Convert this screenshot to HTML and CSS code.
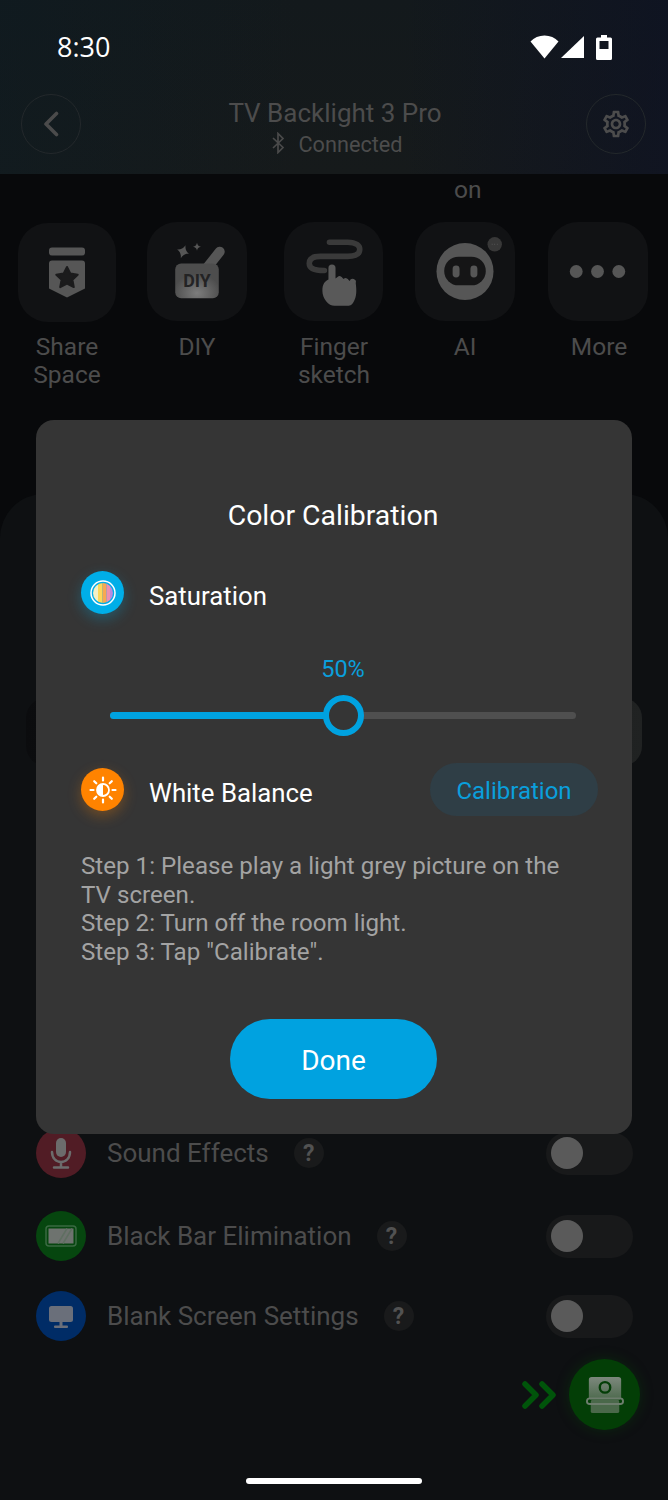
FILE: index.html
```html
<!DOCTYPE html>
<html lang="en">
<head>
<meta charset="utf-8">
<title>TV Backlight 3 Pro</title>
<link rel="stylesheet" href="styles.css">
</head>
<body>
<div class="screen">
  <header class="header">
    <div class="status">
      <span class="time">8:30</span>
      <div class="status-icons">
        <svg class="ic-wifi" viewBox="0 0 29 24"><path d="M14.5 23.5 0.5 6.5C4 2.6 9 0.5 14.5 0.5S25 2.6 28.5 6.5Z" fill="#fff"/></svg>
        <svg class="ic-cell" viewBox="0 0 23 22"><path d="M0 22 23 0V22Z" fill="#fff"/></svg>
        <svg class="ic-batt" viewBox="0 0 16 25"><path d="M5 0h6v2.500h3.500a1.500 1.500 0 0 1 1.500 1.500v19.500a1.500 1.500 0 0 1-1.500 1.500h-13a1.500 1.500 0 0 1-1.500-1.500v-19.500a1.500 1.500 0 0 1 1.500-1.500h3.500zM3.500 6v8h9v-8z" fill="#fff" fill-rule="evenodd"/></svg>
      </div>
    </div>
    <div class="nav">
      <div class="round-btn">
        <svg class="ic-back" viewBox="0 0 16 26"><path d="M13.500 2.500 3 13l10.500 10.500" fill="none" stroke="#4b4b4b" stroke-width="3.600" stroke-linecap="round" stroke-linejoin="round"/></svg>
      </div>
      <div class="nav-title">
        <div class="title">TV Backlight 3 Pro</div>
        <div class="subtitle">
          <svg class="ic-bt" viewBox="0 0 14 22"><path d="M2 6l10 9.500-5 5V1.500l5 5L2 16" fill="none" stroke="#4a4a4a" stroke-width="1.700"/></svg>
          <span>Connected</span>
        </div>
      </div>
      <div class="round-btn">
        <svg class="ic-gear" viewBox="0 0 24 24"><path fill="#4c4c4c" d="M19.430 12.980c.04-.32.07-.64.07-.98 0-.34-.03-.66-.07-.98l2.110-1.650c.19-.15.24-.42.12-.64l-2-3.460c-.09-.16-.26-.25-.44-.25-.06 0-.12.01-.17.03l-2.490 1c-.52-.4-1.080-.73-1.690-.98l-.38-2.650C14.460 2.180 14.250 2 14 2h-4c-.25 0-.46.18-.49.42l-.38 2.650c-.61.25-1.170.59-1.690.98l-2.490-1c-.06-.02-.12-.03-.18-.03-.17 0-.34.09-.43.25l-2 3.460c-.13.22-.07.49.12.64l2.110 1.650c-.04.32-.07.65-.07.98 0 .33.03.66.07.98l-2.110 1.650c-.19.15-.24.42-.12.64l2 3.460c.09.16.26.25.44.25.06 0 .12-.01.17-.03l2.490-1c.52.4 1.080.73 1.690.98l.38 2.650c.03.24.24.42.49.42h4c.25 0 .46-.18.49-.42l.38-2.650c.61-.25 1.170-.59 1.690-.98l2.490 1c.06.02.12.03.18.03.17 0 .34-.09.43-.25l2-3.460c.12-.22.07-.49-.12-.64l-2.110-1.650zm-1.980-1.710c.04.31.05.52.05.73 0 .21-.02.43-.05.73l-.14 1.130.89.7 1.080.84-.7 1.210-1.270-.51-1.040-.42-.9.68c-.43.32-.84.56-1.250.73l-1.060.43-.16 1.130-.2 1.350h-1.400l-.19-1.350-.16-1.130-1.060-.43c-.43-.18-.83-.41-1.230-.71l-.91-.7-1.060.43-1.270.51-.7-1.210 1.080-.84.89-.7-.14-1.130c-.03-.31-.05-.54-.05-.74s.02-.43.05-.73l.14-1.130-.89-.7-1.080-.84.7-1.210 1.270.51 1.040.42.9-.68c.43-.32.84-.56 1.250-.73l1.060-.43.16-1.130.2-1.350h1.390l.19 1.350.16 1.130 1.060.43c.43.18.83.41 1.230.71l.91.7 1.060-.43 1.270-.51.7 1.210-1.070.85-.89.7.14 1.130zM12 8c-2.210 0-4 1.790-4 4s1.790 4 4 4 4-1.790 4-4-1.790-4-4-4zm0 6c-1.100 0-2-.9-2-2s.9-2 2-2 2 .9 2 2-.9 2-2 2z"/></svg>
      </div>
    </div>
  </header>

  <div class="on-row">on</div>

  <div class="tools">
    <div class="tool tool-share">
      <div class="tile">
        <svg class="tile-ic" viewBox="0 0 98 98"><rect x="31" y="24" width="36" height="8" rx="3" fill="#565656"/><path d="M31 40a3 3 0 0 1 3-3h30a3 3 0 0 1 3 3v25L49 74 31 65Z" fill="#565656"/><path d="M49 43.500l3.400 6.600 7.300 1.100-5.300 5.100 1.400 7.300-6.800-3.500-6.800 3.500 1.400-7.300-5.300-5.100 7.300-1.100Z" fill="#1b1b1c" stroke="#1b1b1c" stroke-width="2" stroke-linejoin="round"/></svg>
      </div>
      <div class="tool-label">Share<br>Space</div>
    </div>
    <div class="tool tool-diy">
      <div class="tile">
        <svg class="tile-ic" viewBox="0 0 100 100">
          <defs><radialGradient id="glare" cx="0.5" cy="0.85" r="0.55"><stop offset="0" stop-color="#7d7d7d"/><stop offset="1" stop-color="#4d4d4d"/></radialGradient></defs>
          <path d="M61 45 73 30" stroke="#565656" stroke-width="10" stroke-linecap="round"/>
          <rect x="28" y="42" width="44" height="35" rx="6" fill="url(#glare)"/>
          <path d="M36 23c1 4 3 6 6.500 7-3.500 1-5.500 3-6.500 7-1-4-3-6-6.500-7 3.500-1 5.500-3 6.500-7Z" fill="#565656" transform="rotate(20 36 30)"/>
          <path d="M50 21c.5 2.500 1.500 3.500 4 4-2.500.5-3.500 1.500-4 4-.5-2.500-1.500-3.500-4-4 2.500-.5 3.500-1.500 4-4Z" fill="#565656"/>
          <text x="50" y="66" class="diy-mark">DIY</text>
        </svg>
      </div>
      <div class="tool-label">DIY</div>
    </div>
    <div class="tool tool-finger">
      <div class="tile">
        <svg class="tile-ic" viewBox="0 0 98 98">
          <path d="M45 20h18c9 0 12 4 12 7 0 4-3 7-12 7H36c-8 0-11 3-11 7s4 7 15 7" fill="none" stroke="#3a3a3a" stroke-width="5.500" stroke-linecap="round"/>
          <path d="M44 45.500a3.500 3.500 0 0 1 7 0V56l2-1.500a3 3 0 0 1 5 1l1 1a3 3 0 0 1 5 1l1 1a3 3 0 0 1 6 2C72 68 72 74 69 79 67 83 65 83 62 83H50C44 83 38 76 38 68 38 62 40 59 44 57Z" fill="#595959"/>
        </svg>
      </div>
      <div class="tool-label">Finger<br>sketch</div>
    </div>
    <div class="tool tool-ai">
      <div class="tile">
        <svg class="tile-ic" viewBox="0 0 100 100">
          <circle cx="50" cy="50" r="28.800" fill="#565656"/>
          <rect x="29" y="35" width="42" height="29" rx="14.500" fill="#151516"/>
          <rect x="37.500" y="44" width="7" height="12" rx="3.500" fill="#565656"/>
          <rect x="55.500" y="44" width="7" height="12" rx="3.500" fill="#565656"/>
          <circle cx="80" cy="22.500" r="7.300" fill="#383838"/>
          <path d="M77 22.500h.8M79.600 22.500h.8M82.200 22.500h.8" stroke="#5c5c5c" stroke-width="1"/>
        </svg>
      </div>
      <div class="tool-label">AI</div>
    </div>
    <div class="tool tool-more">
      <div class="tile">
        <svg class="tile-ic" viewBox="0 0 100 100"><circle cx="28" cy="50" r="6.500" fill="#565656"/><circle cx="49.500" cy="50" r="6.500" fill="#565656"/><circle cx="71" cy="50" r="6.500" fill="#565656"/></svg>
      </div>
      <div class="tool-label">More</div>
    </div>
  </div>

  <section class="panel">
    <div class="under-card"></div>
    <div class="rows">
      <div class="row row-first">
        <div class="row-ic ic-red">
          <svg viewBox="0 0 50 50" class="row-svg"><rect x="20" y="10" width="10" height="19" rx="5" fill="#6c6c6c"/><path d="M16 24c0 6 4 10 9 10s9-4 9-10M25 34v5M18 39.500h14" fill="none" stroke="#6c6c6c" stroke-width="2.500" stroke-linecap="round"/></svg>
        </div>
        <span class="row-text">Sound Effects</span>
        <span class="help">?</span>
        <div class="toggle"><span class="knob"></span></div>
      </div>
      <div class="row row-second">
        <div class="row-ic ic-green">
          <svg viewBox="0 0 50 50" class="row-svg"><rect x="10" y="15" width="30" height="20" rx="3" fill="none" stroke="#3a6a42" stroke-width="1.500"/><rect x="12.500" y="17.500" width="25" height="15" fill="#6e736f"/><path d="M22 32.500 31 17.500M27 32.500 36 17.500" stroke="#5f6f61" stroke-width="1.500"/></svg>
        </div>
        <span class="row-text">Black Bar Elimination</span>
        <span class="help">?</span>
        <div class="toggle"><span class="knob"></span></div>
      </div>
      <div class="row row-third">
        <div class="row-ic ic-blue">
          <svg viewBox="0 0 50 50" class="row-svg"><rect x="13" y="15" width="24" height="16" rx="2.500" fill="#6a6f7a"/><rect x="23.500" y="31" width="3" height="4" fill="#6a6f7a"/><rect x="18" y="34.500" width="14" height="2.500" rx="1" fill="#6a6f7a"/></svg>
        </div>
        <span class="row-text">Blank Screen Settings</span>
        <span class="help">?</span>
        <div class="toggle"><span class="knob"></span></div>
      </div>
    </div>
  </section>

  <div class="fab-wrap">
    <svg class="ic-chev" viewBox="0 0 36 28"><path d="M3 3 14 14 3 25M20 3 31 14 20 25" fill="none" stroke="#00540a" stroke-width="5.500" stroke-linecap="round" stroke-linejoin="round"/></svg>
    <div class="fab">
      <svg class="fab-ic" viewBox="0 0 40 40"><defs><linearGradient id="fabg" x1="0" y1="0" x2="0" y2="1"><stop offset="0" stop-color="#7d887d"/><stop offset="1" stop-color="#4d6a4d"/></linearGradient></defs><rect x="3" y="1" width="34" height="24" rx="3" fill="url(#fabg)"/><circle cx="20" cy="12" r="5.500" fill="none" stroke="#043e07" stroke-width="2.500"/><rect x="5" y="25" width="30" height="14" rx="2" fill="#4a684a"/><rect x="1" y="23.500" width="38" height="6" rx="3" fill="none" stroke="#6d7d6d" stroke-width="2"/></svg>
    </div>
  </div>

  <div class="home-bar"></div>

  <div class="modal">
    <h2 class="modal-title">Color Calibration</h2>
    <div class="setting setting-sat">
      <div class="set-ic set-ic-blue">
        <svg viewBox="0 0 26 26" class="set-svg">
          <defs><clipPath id="disc"><circle cx="13" cy="13" r="10"/></clipPath></defs>
          <g clip-path="url(#disc)"><rect x="3" y="3" width="5" height="20" fill="#f3f0c8"/><rect x="8" y="3" width="4.500" height="20" fill="#fdd85a"/><rect x="12.500" y="3" width="4" height="20" fill="#f8a850"/><rect x="16.500" y="3" width="3.500" height="20" fill="#ee8fb0"/><rect x="20" y="3" width="3" height="20" fill="#b98be0"/></g>
          <circle cx="13" cy="13" r="12" fill="none" stroke="#fff" stroke-width="1.500"/>
        </svg>
      </div>
      <span class="set-label">Saturation</span>
    </div>
    <div class="slider-block">
      <div class="slider-value">50%</div>
      <div class="slider">
        <div class="slider-fill"></div>
        <div class="slider-thumb"></div>
      </div>
    </div>
    <div class="setting setting-wb">
      <div class="set-ic set-ic-orange">
        <svg viewBox="0 0 28 28" class="set-svg">
          <circle cx="14" cy="14" r="6" fill="none" stroke="#fff" stroke-width="1.800"/>
          <path d="M14 8a6 6 0 0 0 0 12Z" fill="#fff"/>
          <path d="M14 1.500v3M14 23.500v3M1.500 14h3M23.500 14h3M5.200 5.200l2.100 2.100M20.700 20.700l2.100 2.100M5.200 22.800l2.100-2.100M20.700 7.300l2.100-2.100" stroke="#fff" stroke-width="2.200" stroke-linecap="round"/>
        </svg>
      </div>
      <span class="set-label">White Balance</span>
      <button class="calib">Calibration</button>
    </div>
    <p class="steps">Step 1: Please play a light grey picture on the TV screen.<br>Step 2: Turn off the room light.<br>Step 3: Tap "Calibrate".</p>
    <button class="done">Done</button>
  </div>
</div>
</body>
</html>
```
FILE: styles.css
```css
* { box-sizing: border-box; }
html, body { margin: 0; padding: 0; background: #08090b; }
body { font-family: Roboto, "Liberation Sans", sans-serif; }

.screen {
  position: relative;
  width: 668px;
  height: 1500px;
  overflow: hidden;
  background: #08090b;
  color: #4c4c4c;
}

/* header */
.header {
  height: 174px;
  background:
    linear-gradient(90deg, rgba(12, 28, 36, .42) 0%, rgba(22, 26, 27, 0) 45%, rgba(22, 26, 27, 0) 60%, rgba(12, 16, 38, .55) 100%),
    linear-gradient(180deg, #13191c 0%, #161a1b 100%);
}
.status {
  display: flex;
  align-items: center;
  justify-content: space-between;
  height: 94px;
  padding: 0 56px 0 57px;
}
.time {
  font-family: "Open Sans", Roboto, sans-serif;
  font-size: 27px;
  font-weight: 500;
  color: #fff;
  line-height: 28px;
  margin-top: -1px;
}
.status-icons { display: flex; align-items: center; gap: 2px; }
.ic-wifi { width: 29px; height: 24px; display: block; }
.ic-cell { width: 23px; height: 22px; display: block; }
.ic-batt { width: 16px; height: 25px; display: block; margin-left: 10px; }
.nav {
  display: flex;
  align-items: center;
  justify-content: space-between;
  height: 60px;
  padding: 0 22px 0 21px;
}
.round-btn {
  width: 60px;
  height: 60px;
  border: 1px solid #23282b;
  border-radius: 50%;
  display: flex;
  align-items: center;
  justify-content: center;
}
.ic-back { width: 16px; height: 26px; }
.ic-gear { width: 32px; height: 32px; }
.nav-title { text-align: center; padding-left: 3px; }
.title { font-size: 26px; line-height: 35px; margin-top: 5px; }
.subtitle {
  display: flex;
  align-items: center;
  justify-content: center;
  gap: 13px;
  margin-top: 1px;
  padding-left: 4px;
  font-size: 21.700px;
  line-height: 26px;
}
.ic-bt { width: 14px; height: 22px; margin-top: -4px; }

/* background content */
.on-row {
  height: 48px;
  padding-left: 454px;
  font-size: 24.500px;
  line-height: 32px;
}
.tools {
  display: flex;
  align-items: flex-start;
  height: 272px;
  padding-left: 18px;
}
.tool { display: flex; flex-direction: column; align-items: center; flex: none; }
.tool-share { width: 98px; margin-top: 1px; }
.tool-diy { width: 100px; margin-left: 31px; }
.tool-finger { width: 99px; margin-left: 37px; }
.tool-ai { width: 100px; margin-left: 32px; }
.tool-more { width: 100px; margin-left: 33px; }
.tool-share .tool-label { margin-top: 11px; }
.tool-finger .tool-label { padding-left: 1px; }
.tool-more .tool-label { padding-left: 2px; }
.tile {
  width: 100%;
  height: 99px;
  border-radius: 30px;
  background: #111214;
}
.tile-ic { display: block; width: 100%; height: 100%; }
.diy-mark {
  font-family: Roboto, sans-serif;
  font-size: 18px;
  font-weight: 700;
  text-anchor: middle;
  fill: #232324;
}
.tool-label {
  margin-top: 12px;
  font-size: 24.500px;
  line-height: 28px;
  text-align: center;
}

.panel {
  height: 1006px;
  padding: 204px 35px 0 36px;
  background: #0e1012;
  border-radius: 44px 44px 0 0;
}
.under-card {
  height: 68px;
  margin: 0 -9px 0 -10px;
  border-radius: 20px;
  background: linear-gradient(90deg, #0b0c0e 0%, #202222 100%);
}
.rows { margin-top: 362px; }
.row { display: flex; align-items: center; height: 50px; }
.row-second { margin-top: 33px; }
.row-third { margin-top: 30px; }
.row-ic { width: 50px; height: 50px; border-radius: 50%; flex: none; }
.row-svg { display: block; width: 50px; height: 50px; }
.ic-red { background: #511c25; }
.ic-green { background: #06460f; }
.ic-blue { background: #002c66; }
.row-text { margin-left: 21px; font-size: 26px; color: #4c4c4c; }
.help {
  width: 30px;
  height: 30px;
  margin-left: 25px;
  border-radius: 50%;
  background: #191a1b;
  display: flex;
  align-items: center;
  justify-content: center;
  font-size: 23px;
  font-weight: 700;
  color: #525252;
}
.toggle {
  margin-left: auto;
  width: 87px;
  height: 43px;
  padding: 5px;
  border-radius: 22px;
  background: #18191a;
}
.knob { display: block; width: 32px; height: 32px; border-radius: 50%; background: #5a5a5a; }

/* floating */
.fab-wrap {
  position: absolute;
  left: 522px;
  top: 1359px;
  display: flex;
  align-items: center;
  gap: 11px;
}
.ic-chev { width: 36px; height: 28px; display: block; }
.fab {
  width: 71px;
  height: 71px;
  border-radius: 50%;
  background: #033e06;
  box-shadow: 0 0 14px rgba(0, 90, 10, .3);
  display: flex;
  align-items: center;
  justify-content: center;
}
.fab-ic { width: 38px; height: 38px; display: block; }
.home-bar {
  position: absolute;
  left: 246px;
  top: 1478px;
  width: 176px;
  height: 6px;
  border-radius: 3px;
  background: #fff;
}

/* modal */
.modal {
  position: absolute;
  left: 36px;
  top: 420px;
  width: 596px;
  height: 714px;
  padding: 0 34px 0 45px;
  border-radius: 18px;
  background: #353535;
  color: #fff;
}
.modal-title {
  margin: 78px -11px 0 -11px;
  padding: 0 13px 0 0;
  font-size: 28.400px;
  font-weight: 400;
  line-height: 36px;
  text-align: center;
}
.setting { display: flex; align-items: center; }
.setting-sat { margin-top: 37px; }
.setting-wb { margin-top: 44px; height: 53px; }
.set-ic {
  width: 43px;
  height: 43px;
  border-radius: 50%;
  flex: none;
  display: flex;
  align-items: center;
  justify-content: center;
}
.set-ic-blue { background: #00aee8; box-shadow: 0 5px 14px rgba(0, 174, 232, .3); }
.set-ic-orange { background: #ff8300; box-shadow: 0 5px 14px rgba(255, 131, 0, .3); }
.set-svg { display: block; width: 26px; height: 26px; }
.set-ic-orange .set-svg { width: 28px; height: 28px; }
.set-label { margin-left: 25px; font-size: 25.800px; line-height: 32px; }
.setting-sat .set-label { margin-top: 7px; }
.setting-wb .set-label { margin-top: 6px; }
.calib {
  margin-left: auto;
  width: 168px;
  height: 53px;
  border: 0;
  border-radius: 27px;
  background: #2f3e46;
  color: #0a9fdc;
  font-family: inherit;
  font-size: 24px;
  padding: 2px 0 0;
}
.slider-block { margin-top: 42px; padding-left: 29px; padding-right: 22px; }
.slider-value {
  font-size: 23.500px;
  line-height: 26px;
  text-align: center;
  color: #0a9fdc;
}
.slider {
  position: relative;
  height: 7px;
  margin-top: 30px;
  border-radius: 4px;
  background: #4f4f4f;
}
.slider-fill { width: 50%; height: 100%; border-radius: 4px; background: #00a2e0; }
.slider-thumb {
  position: absolute;
  left: 50%;
  top: 50%;
  width: 41px;
  height: 41px;
  margin: -20.500px 0 0 -20.500px;
  border: 6px solid #00a2e0;
  border-radius: 50%;
  background: #353535;
}
.steps {
  margin: 36px 0 0 0;
  padding-right: 20px;
  font-size: 24.150px;
  line-height: 28.500px;
  color: #a3a3a3;
}
.done {
  display: block;
  width: 207px;
  height: 80px;
  margin: 53px auto 0 149px;
  padding: 3px 0 0;
  border: 0;
  border-radius: 40px;
  background: #00a2e0;
  color: #fff;
  font-family: inherit;
  font-size: 28px;
}
```
